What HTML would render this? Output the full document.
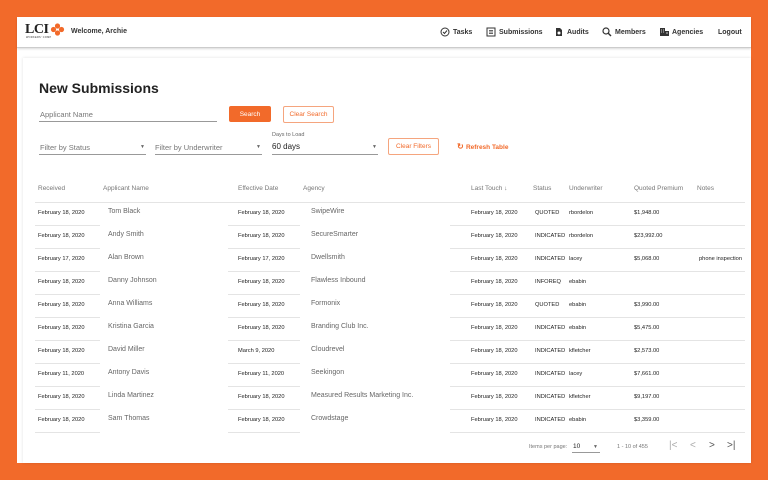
<!DOCTYPE html><html><head><style>
*{margin:0;padding:0;box-sizing:border-box}
body{width:768px;height:480px;background:#f26a2a;font-family:"Liberation Sans",sans-serif;position:relative;overflow:hidden;color:#222}
.a{position:absolute;white-space:nowrap}
#panel{position:absolute;left:17px;top:17px;width:734px;height:446px;background:#fff}
#hdr{position:absolute;left:17px;top:17px;width:734px;height:31px;border-bottom:1px solid #ccc;box-shadow:0 1px 2px rgba(0,0,0,.15)}
#card{position:absolute;left:23px;top:58px;width:728px;height:405px;background:#fff;box-shadow:0 0 3px rgba(0,0,0,.12)}
.nav{font-size:7px;font-weight:bold;color:#333;top:29px}
.th{font-size:6.5px;color:#777;top:185px}
.d{font-size:5.7px;color:#222}
.n{font-size:7px;color:#666}
.ln{position:absolute;height:1px;background:#e4e4e4}
.btn{position:absolute;font-size:6.5px;text-align:center;border-radius:2px;display:flex;align-items:center;justify-content:center}
.ul{position:absolute;height:1px;background:#999}
.sel{font-size:7.5px;color:#777}
.car{font-size:5px;color:#666}
</style></head><body>
<div id="panel"></div><div id="card"></div><div id="hdr"></div>
<div class="a" style="left:25px;top:22px;font-family:'Liberation Serif',serif;font-size:14px;font-weight:bold;color:#222;letter-spacing:-0.5px">LCI</div>
<svg class="a" style="left:49px;top:23px" width="17" height="13"><g fill="#f26a2a"><circle cx="8.5" cy="3" r="2.6"/><circle cx="8.5" cy="10" r="2.6"/><circle cx="4.5" cy="6.5" r="2.6"/><circle cx="12.5" cy="6.5" r="2.6"/></g></svg>
<div class="a" style="left:26px;top:36px;font-size:2.5px;color:#333;letter-spacing:.3px">WORKERS' COMP</div>
<div class="a" style="left:71px;top:28px;font-size:7px;font-weight:bold;color:#333">Welcome, Archie</div>
<svg class="a" style="left:440px;top:27px" width="10" height="10"><circle cx="5" cy="5" r="4" fill="none" stroke="#333" stroke-width="1"/><path d="M3 5l1.5 1.5L7 3.5" fill="none" stroke="#333" stroke-width="1"/></svg>
<div class="a nav" style="left:453px">Tasks</div>
<svg class="a" style="left:486px;top:27px" width="10" height="10"><rect x="1" y="1" width="8" height="8" fill="none" stroke="#333"/><path d="M3 3.5h4M3 5h4M3 6.5h4" stroke="#333" stroke-width=".8"/></svg>
<div class="a nav" style="left:499px">Submissions</div>
<svg class="a" style="left:554px;top:27px" width="10" height="10"><path d="M2 1h4l2 2v6H2z" fill="#333"/><circle cx="5" cy="6" r="1.5" fill="#fff"/></svg>
<div class="a nav" style="left:567px">Audits</div>
<svg class="a" style="left:602px;top:27px" width="10" height="10"><circle cx="4" cy="4" r="3" fill="none" stroke="#333" stroke-width="1.2"/><path d="M6 6l3 3" stroke="#333" stroke-width="1.4"/></svg>
<div class="a nav" style="left:615px">Members</div>
<svg class="a" style="left:659px;top:27px" width="11" height="10"><path d="M1 1h5v8H1zM6 4h4v5H6z" fill="#333"/><path d="M2 3h1M4 3h1M2 5h1M4 5h1M7 6h2" stroke="#fff" stroke-width=".7"/></svg>
<div class="a nav" style="left:672px">Agencies</div>
<div class="a nav" style="left:718px">Logout</div>
<div class="a" style="left:39px;top:80px;font-size:14px;font-weight:bold;color:#222">New Submissions</div>
<div class="a sel" style="left:40px;top:110px">Applicant Name</div>
<div class="ul" style="left:39px;top:121px;width:178px"></div>
<div class="btn" style="left:229px;top:106px;width:42px;height:16px;background:#f26a2a;color:#fff">Search</div>
<div class="btn" style="left:283px;top:106px;width:51px;height:17px;border:1px solid #f5a57e;color:#f26a2a">Clear Search</div>
<div class="a sel" style="left:40px;top:143px">Filter by Status</div><div class="a car" style="left:140px;top:144px">▼</div>
<div class="ul" style="left:39px;top:154px;width:107px"></div>
<div class="a sel" style="left:155px;top:143px">Filter by Underwriter</div><div class="a car" style="left:256px;top:144px">▼</div>
<div class="ul" style="left:155px;top:154px;width:107px"></div>
<div class="a" style="left:272px;top:132px;font-size:5.5px;color:#666">Days to Load</div>
<div class="a" style="left:272px;top:142px;font-size:8px;color:#222">60 days</div><div class="a car" style="left:372px;top:144px">▼</div>
<div class="ul" style="left:272px;top:154px;width:106px"></div>
<div class="btn" style="left:388px;top:138px;width:51px;height:17px;border:1px solid #f5a57e;color:#f26a2a">Clear Filters</div>
<div class="a" style="left:457px;top:142px;font-size:8px;color:#f26a2a;font-weight:bold">↻ <span style="font-size:6.5px">Refresh Table</span></div>
<div class="a th" style="left:38px">Received</div>
<div class="a th" style="left:103px">Applicant Name</div>
<div class="a th" style="left:238px">Effective Date</div>
<div class="a th" style="left:303px">Agency</div>
<div class="a th" style="left:471px">Last Touch ↓</div>
<div class="a th" style="left:533px">Status</div>
<div class="a th" style="left:569px">Underwriter</div>
<div class="a th" style="left:634px">Quoted Premium</div>
<div class="a th" style="left:697px">Notes</div>
<div class="ln" style="left:35px;top:202px;width:710px"></div>
<div id="rows"></div>
<script>
var R=[["February 18, 2020","Tom Black","February 18, 2020","SwipeWire","QUOTED","rbordelon","$1,948.00",""],
["February 18, 2020","Andy Smith","February 18, 2020","SecureSmarter","INDICATED","rbordelon","$23,992.00",""],
["February 17, 2020","Alan Brown","February 17, 2020","Dwellsmith","INDICATED","lacey","$5,068.00","phone inspection"],
["February 18, 2020","Danny Johnson","February 18, 2020","Flawless Inbound","INFOREQ","ebabin","",""],
["February 18, 2020","Anna Williams","February 18, 2020","Formonix","QUOTED","ebabin","$3,990.00",""],
["February 18, 2020","Kristina Garcia","February 18, 2020","Branding Club Inc.","INDICATED","ebabin","$5,475.00",""],
["February 18, 2020","David Miller","March 9, 2020","Cloudrevel","INDICATED","kfletcher","$2,573.00",""],
["February 11, 2020","Antony Davis","February 11, 2020","Seekingon","INDICATED","lacey","$7,661.00",""],
["February 18, 2020","Linda Martinez","February 18, 2020","Measured Results Marketing Inc.","INDICATED","kfletcher","$9,197.00",""],
["February 18, 2020","Sam Thomas","February 18, 2020","Crowdstage","INDICATED","ebabin","$3,359.00",""]];
var h="";R.forEach(function(r,i){var y=210+i*23;
h+='<div class="a d" style="left:38px;top:'+y+'px">'+r[0]+'</div>';
h+='<div class="a n" style="left:108px;top:'+(y-2)+'px">'+r[1]+'</div>';
h+='<div class="a d" style="left:238px;top:'+y+'px">'+r[2]+'</div>';
h+='<div class="a n" style="left:311px;top:'+(y-2)+'px">'+r[3]+'</div>';
h+='<div class="a d" style="left:471px;top:'+y+'px">'+"February 18, 2020"+'</div>';
h+='<div class="a d" style="left:535px;top:'+y+'px">'+r[4]+'</div>';
h+='<div class="a d" style="left:569px;top:'+y+'px">'+r[5]+'</div>';
h+='<div class="a d" style="left:634px;top:'+y+'px">'+r[6]+'</div>';
h+='<div class="a d" style="left:699px;top:'+y+'px">'+r[7]+'</div>';
var ly=y+15;h+='<div class="ln" style="left:35px;top:'+ly+'px;width:65px"></div><div class="ln" style="left:228px;top:'+ly+'px;width:72px"></div><div class="ln" style="left:450px;top:'+ly+'px;width:295px"></div>';});
document.getElementById("rows").innerHTML=h;
</script>
<div class="a" style="left:529px;top:444px;font-size:5.5px;color:#777">Items per page:</div>
<div class="a" style="left:573px;top:443px;font-size:6.5px;color:#222">10</div><div class="a car" style="left:593px;top:444px">▼</div>
<div class="ul" style="left:572px;top:452px;width:28px"></div>
<div class="a" style="left:617px;top:444px;font-size:5.5px;color:#777">1 - 10 of 455</div>
<div class="a" style="left:669px;top:440px;font-size:10px;color:#aaa">|&lt;</div>
<div class="a" style="left:690px;top:440px;font-size:10px;color:#aaa">&lt;</div>
<div class="a" style="left:709px;top:440px;font-size:10px;color:#555">&gt;</div>
<div class="a" style="left:727px;top:440px;font-size:10px;color:#555">&gt;|</div>
</body></html>
